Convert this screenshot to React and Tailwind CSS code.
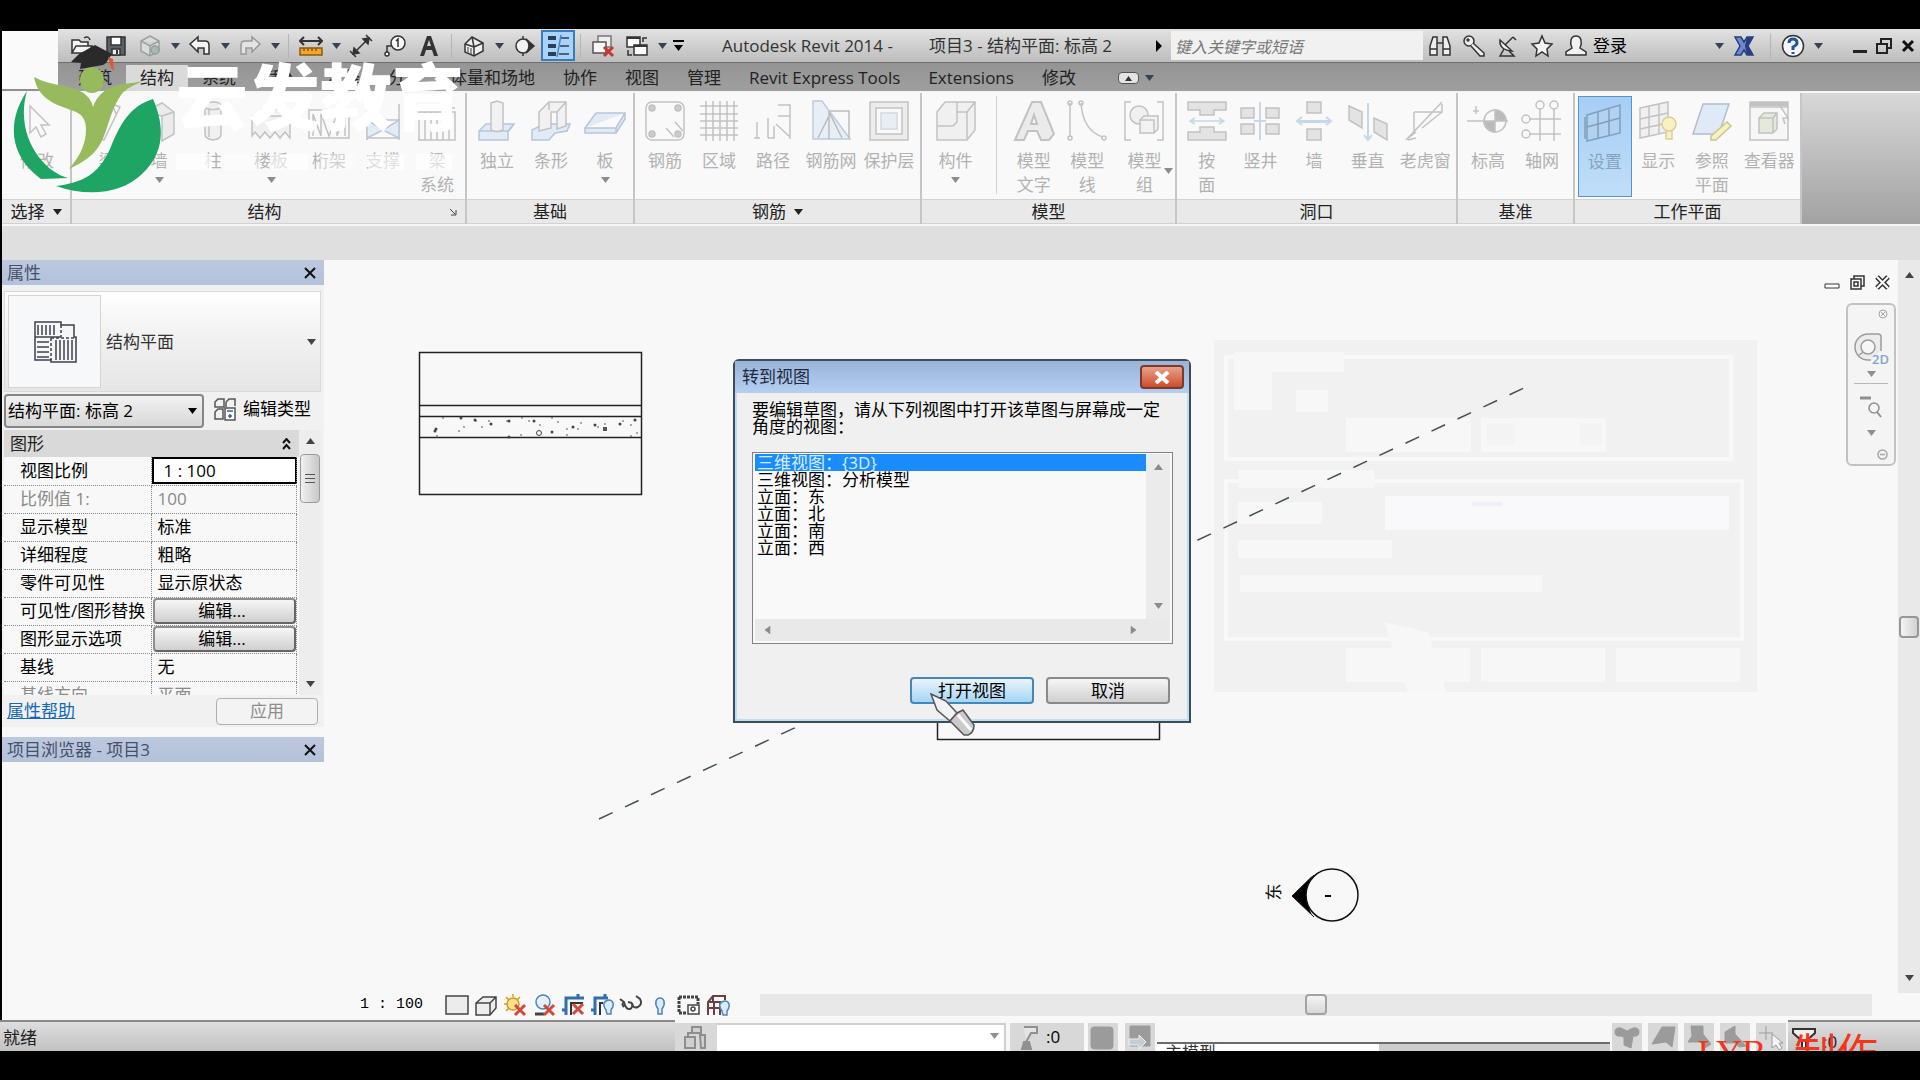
import React, { useState } from "react";

const Caret = ({ className = "text-gray-700" }) => (
  <svg width="9" height="6" viewBox="0 0 9 6" className={className}>
    <path d="M0 0h9L4.5 6z" fill="currentColor" />
  </svg>
);

const CaretButton = ({ label }) => (
  <button aria-label={label} className="w-4 h-8 flex items-center justify-center">
    <Caret />
  </button>
);

const ToolSeparator = () => (
  <div className="w-[11px] h-6 flex justify-center">
    <div className="w-px h-full bg-[#b4b4b4]" />
  </div>
);

const ToolButton = ({ label, active, children }) => (
  <button
    aria-label={label}
    className={
      active
        ? "w-[34px] h-[31px] flex items-center justify-center border-2 border-[#3d7ab8] bg-[#a9d3fb]"
        : "w-[34px] h-8 flex items-center justify-center"
    }
  >
    <svg
      width="24"
      height="24"
      viewBox="0 0 24 24"
      fill="none"
      stroke="#333"
      strokeWidth="1.5"
    >
      {children}
    </svg>
  </button>
);

const QuickAccessBar = () => (
  <div className="flex items-center h-[34px] pl-[7px] border-b border-[#6f6f6f] bg-linear-to-b from-[#e2e2e2] to-[#bdbdbd] whitespace-nowrap">
    <ToolButton label="打开">
      <path d="M2 19V6h7l2 2h7v4M2 19l4-7h16l-4 7z" fill="#f4f4f4" />
      <path d="M14 4c3-2 5-1 6 2" />
    </ToolButton>
    <ToolButton label="保存">
      <path d="M3 3h18v18H3z" fill="#5a6068" />
      <path d="M7 3h10v8H7z" fill="#fff" />
      <path d="M8 15h8v6H8z" fill="#eee" />
      <path d="M13 16v4" strokeWidth="2" />
    </ToolButton>
    <ToolButton label="同步">
      <path d="M12 2l9 5v10l-9 5-9-5V7zM3 7l9 5 9-5M12 12v10" fill="#d8dcdc" stroke="#9aa0a0" />
      <circle cx="17" cy="16" r="4" fill="#a9b8b4" stroke="#8fa09c" />
    </ToolButton>
    <CaretButton label="同步选项" />
    <ToolButton label="放弃">
      <path d="M2 10l8-7v4h7q4 0 4 4v9h-5v-6h-6v4z" fill="#f4f4f4" />
    </ToolButton>
    <CaretButton label="放弃列表" />
    <ToolButton label="重做">
      <path d="M22 10l-8-7v4H7q-4 0-4 4v9h5v-6h6v4z" fill="#e4e4e4" stroke="#999" />
    </ToolButton>
    <CaretButton label="重做列表" />
    <ToolSeparator />
    <ToolButton label="测量">
      <path d="M1 7h22M5 3L1 7l4 4M19 3l4 4-4 4" strokeWidth="2" />
      <path d="M1 14h22v7H1z" fill="#f2a62a" stroke="#8a5a10" />
      <path d="M5 14v3M9 14v3M13 14v3M17 14v3" stroke="#8a5a10" />
    </ToolButton>
    <CaretButton label="测量选项" />
    <ToolButton label="对齐尺寸标注">
      <path d="M4 20L20 4M1 17l6 6M17 1l6 6" />
      <path d="M4 20l1-6 5 5zM20 4l-1 6-5-5z" fill="#333" />
    </ToolButton>
    <ToolButton label="按类别标记">
      <circle cx="15" cy="9" r="7" fill="#f6f6f6" />
      <path d="M8 12H4v6M13 7l2-2v8" />
      <circle cx="4" cy="20" r="2" fill="#fff" />
    </ToolButton>
    <ToolButton label="文字">
      <path d="M3 22L10 2h4l7 20h-4l-2-6H9l-2 6zM10 12h4l-2-6z" fill="#333" stroke="none" fillRule="evenodd" />
    </ToolButton>
    <ToolSeparator />
    <ToolButton label="默认三维视图">
      <path d="M3 10l7-7 11 6v8l-9 5-9-4z" fill="#eee" />
      <path d="M3 10l9 3 9-4M12 13v9M10 3l2 10" />
      <path d="M6 13v6M9 14v6" stroke="#777" />
    </ToolButton>
    <CaretButton label="三维视图选项" />
    <ToolButton label="剖面">
      <circle cx="11" cy="12" r="7" fill="#f1f1f1" />
      <path d="M14 5l8 7-8 7q6-7 0-14z" fill="#333" />
      <path d="M11 2v3M11 19v3" />
    </ToolButton>
    <ToolButton label="细线" active>
      <path d="M2 4h8M2 12h8M2 20h8" strokeWidth="4" stroke="#2b3f5c" />
      <path d="M15 4h8M14 12h9M13 20h10" stroke="#2b3f5c" />
      <path d="M15 1l-4 22" stroke="#4b86c4" />
    </ToolButton>
    <ToolSeparator />
    <ToolButton label="关闭隐藏窗口">
      <path d="M7 2h13v11H7z" fill="#eee" stroke="#777" />
      <path d="M2 8h13v11H2z" fill="#f6f6f6" stroke="#555" />
      <path d="M13 13l9 9M22 13l-9 9" stroke="#c8372b" strokeWidth="3" />
    </ToolButton>
    <ToolButton label="切换窗口">
      <path d="M2 3h13v10H2z" fill="#fff" />
      <path d="M9 11h13v10H9z" fill="#fff" />
      <path d="M2 4h13M9 12h13" strokeWidth="2" />
      <path d="M18 8V4h4M3 16v5h4" />
    </ToolButton>
    <CaretButton label="窗口列表" />
    <button aria-label="自定义快速访问工具栏" className="w-4 flex flex-col items-center gap-[3px]">
      <span className="w-[11px] h-0.5 bg-black" />
      <Caret className="text-black" />
    </button>
    <div className="flex flex-1 items-center pl-9 text-[17px] text-[#333]">
      <span className="w-[207px]">Autodesk Revit 2014 -</span>
      <span>项目3 - 结构平面: 标高 2</span>
    </div>
    <button aria-label="展开搜索" className="w-4 h-8 flex items-center justify-center">
      <svg width="6" height="12" viewBox="0 0 6 12"><path d="M0 0l6 6-6 6z" /></svg>
    </button>
    <input
      aria-label="搜索"
      placeholder="键入关键字或短语"
      className="w-[252px] h-[29px] ml-1 pl-1 bg-[#f1f1f1] font-['Noto_Sans_CJK_SC',sans-serif] text-[16px] italic placeholder:text-[#777] outline-none"
    />
    <ToolButton label="查找">
      <path d="M2 21V12l3-9h4v18zM22 21V12l-3-9h-4v18zM9 9h6M2 15h7M15 15h7" fill="#eee" />
    </ToolButton>
    <ToolButton label="速博应用中心">
      <circle cx="7" cy="7" r="5" fill="#eee" />
      <circle cx="6" cy="6" r="1" />
      <path d="M11 9l11 10v3h-4L9 12" fill="#eee" />
    </ToolButton>
    <ToolButton label="通讯中心">
      <path d="M4 6q-1 10 12 11z" fill="#eee" />
      <path d="M9 11l8-8M17 3l3 3M8 15l-4 7h14l-5-5" />
    </ToolButton>
    <ToolButton label="收藏夹">
      <path d="M12 2l3 7 7 1-5 5 1 7-6-4-6 4 1-7-5-5 7-1z" fill="#f2f2f2" />
    </ToolButton>
    <ToolButton label="用户">
      <path d="M8 14Q6 10 7 6q1-4 5-4t5 4q1 4-1 8l6 4v3H2v-3z" fill="#f2f2f2" />
    </ToolButton>
    <button className="w-[118px] text-left text-[17px] text-black">登录</button>
    <CaretButton label="登录选项" />
    <ToolButton label="Exchange">
      <path d="M3 3h6l3 5 3-5h6l-5 9 5 9h-6l-3-5-3 5H3l5-9z" fill="#6d8ac9" stroke="#263f80" />
      <path d="M15 3h6l-5 9 5 9h-6l-2-9z" fill="#263f80" stroke="none" />
    </ToolButton>
    <div className="pl-1">
      <ToolSeparator />
    </div>
    <ToolButton label="帮助">
      <circle cx="12" cy="12" r="10.500" fill="#f4f7fb" />
      <path d="M8 9q0-4 4-4t4 4q0 2-4 4v3M12 18v2" stroke="#23559c" strokeWidth="3" />
    </ToolButton>
    <CaretButton label="帮助选项" />
    <div className="flex items-center pl-[22px]">
      <button aria-label="最小化" className="w-6 flex justify-center pt-3">
        <span className="w-3.5 h-[3px] bg-[#222]" />
      </button>
      <button aria-label="还原" className="w-6 flex justify-center">
        <svg width="18" height="18" viewBox="0 0 18 18" fill="none" stroke="#222" strokeWidth="2">
          <path d="M6 6V2h10v9h-4M2 7h10v9H2z" />
        </svg>
      </button>
      <button aria-label="关闭" className="w-6 flex justify-center">
        <svg width="14" height="14" viewBox="0 0 14 14" stroke="#111" strokeWidth="3">
          <path d="M2 2l10 10M12 2L2 12" />
        </svg>
      </button>
    </div>
  </div>
);

const tabs = [
  "建筑",
  "结构",
  "系统",
  "插入",
  "注释",
  "分析",
  "体量和场地",
  "协作",
  "视图",
  "管理",
  "Revit Express Tools",
  "Extensions",
  "修改",
];

const TabBar = () => (
  <div className="flex items-end h-7 pl-1.5 bg-linear-to-b from-[#949494] to-[#9f9f9f] whitespace-nowrap">
    {tabs.map((tab) => (
      <button
        key={tab}
        className={
          tab === "结构"
            ? "h-[26px] px-3.5 leading-[26px] text-[17px] text-[#222] bg-[#dadada]"
            : "h-[26px] px-3.5 leading-[26px] text-[17px] text-[#222]"
        }
      >
        {tab}
      </button>
    ))}
    <button aria-label="最小化功能区" className="flex items-center h-[26px] gap-1.5 ml-7">
      <span className="flex items-center justify-center w-[21px] h-3 rounded-sm border border-[#555] bg-[#e4e4e4]">
        <svg width="7" height="5" viewBox="0 0 7 5"><path d="M0 5h7L3.500 0z" fill="#333" /></svg>
      </span>
      <Caret />
    </button>
  </div>
);

const icons = {
  modify: <path d="M14 6v27l6-6 5 10 5-3-5-9h8z" />,
  beam: <path d="M8 36L26 4l8 3-16 33zM12 28l8 3M26 4l4 10" />,
  wall: <path d="M6 12L24 3l12 9v22l-12 7V16zM24 16l12-4" fill="#ebebeb" />,
  column: <path d="M13 6q0-4 8-4t8 4v28q0 5-8 6-8-1-8-6zM13 8q8 3 16 0M17 9v28" fill="#f0f0f0" />,
  floor: <path d="M2 16h38v22l-5-6-5 6-5-6-5 6-5-6-5 6-5-6-3 4zM10 9h24v7" fill="#f0f0f0" />,
  truss: <path d="M1 10h40v28H1zM5 36V14l8 22V14l8 22 8-22v22l8-22v22" />,
  brace: (
    <g>
      <path d="M5 4v36M37 4v36M5 20h32M5 38h32" />
      <path d="M5 20l16 10L37 20v18L21 30 5 38z" fill="#e3ecf6" stroke="#b9c9dc" />
    </g>
  ),
  beamSystem: <path d="M3 12h36v28H3zM9 12v28M15 12v28M21 12v28M27 12v28M33 12v28M3 8h36" />,
  isolated: (
    <g>
      <path d="M3 31l7-7h28l-6 8v8H3zM3 31h29M32 31l6-7" fill="#e1ebf7" stroke="#b6c6da" />
      <path d="M15 3l6-2 6 2v27q-6 3-12 0z" fill="#f1f1f1" />
    </g>
  ),
  strip: (
    <g>
      <path d="M2 30l12-6h26l-3 7-12 2-6 7H2z" fill="#e1ebf7" stroke="#b6c6da" />
      <path d="M9 12L19 2h17v24l-9 3V12h-6v16l-12 3zM19 2v8M27 12l9-10" fill="#f1f1f1" />
    </g>
  ),
  slab: <path d="M1 28l11-15h29l-9 15zM1 28v5h31l9-14v-6M32 28v5" fill="#e1ebf7" stroke="#b6c6da" />,
  rebar: (
    <g>
      <rect x="2" y="2" width="38" height="38" rx="6" />
      <circle cx="8" cy="8" r="3" fill="#ccc" />
      <circle cx="34" cy="8" r="3" fill="#ccc" />
      <circle cx="8" cy="34" r="3" fill="#ccc" />
      <circle cx="34" cy="34" r="3" fill="#ccc" />
      <path d="M22 28l8 9M31 22l8 9" />
    </g>
  ),
  area: <path d="M2 6h38M2 14h38M2 21h38M2 28h38M2 35h38M8 1v40M15 1v40M22 1v40M29 1v40M36 1v40" />,
  path: <path d="M2 38h6M5 38V22M16 38V18M16 38h6V26M26 5h12v34M26 16h12M24 24l14 13" />,
  fabric: (
    <g stroke="#bccbdb">
      <path d="M3 1h9l28 38H3zM3 1v38" fill="#e7eef6" />
      <path d="M20 11h19v27M19 11v28M8 38l12-24 12 24" stroke="#bcbcbc" />
    </g>
  ),
  cover: (
    <g>
      <rect x="2" y="2" width="38" height="38" fill="#ececec" />
      <rect x="8" y="8" width="26" height="26" fill="#f9f9f9" />
      <rect x="13" y="13" width="16" height="16" fill="#e8eef5" stroke="#d3d9e0" />
    </g>
  ),
  component: <path d="M2 12L10 2h30v28l-8 10H2zM22 2v20l-4 4H2M32 12v28M32 12l8-10M22 12h10" fill="#f0f0f0" />,
  modelText: (
    <path d="M2 40l17-38h9l13 32-5 6h-8l-4-9H15l-4 9zM18 24h6l-3-9z" fill="#ebebeb" fillRule="evenodd" strokeWidth="2" />
  ),
  modelLine: (
    <g>
      <path d="M4 3v34M15 3q2 28 22 34" />
      <circle cx="4" cy="3" r="2" />
      <circle cx="4" cy="38" r="2" />
      <circle cx="15" cy="3" r="2" />
      <circle cx="38" cy="38" r="2" />
    </g>
  ),
  modelGroup: (
    <g>
      <path d="M8 2H2v38h6M34 2h6v38h-6" />
      <circle cx="16" cy="15" r="9" fill="#f0f0f0" />
      <path d="M17 20l4-4h14v13l-4 4H17zM17 20h14v13" fill="#f2f2f2" />
    </g>
  ),
  byFace: (
    <g>
      <path d="M2 2h38v8H28v5H14v-5H2zM2 40h38v-8H28v-5H14v5H2z" fill="#e3e3e3" />
      <path d="M4 21h34M9 18l-5 3 5 3M33 18l5 3-5 3" stroke="#c5d8ea" />
    </g>
  ),
  shaft: (
    <g>
      <path d="M2 8h13v10H2zM27 8h13v10H27zM2 24h13v10H2zM27 24h13v10H27z" fill="#e3e3e3" />
      <path d="M21 2v38M15 21h12" stroke="#c5d8ea" strokeWidth="2" />
    </g>
  ),
  wallOpening: (
    <g>
      <path d="M14 2h14v11H14zM14 29h14v11H14z" fill="#e3e3e3" />
      <path d="M4 21h34M9 17l-5 4 5 4M33 17l5 4-5 4M8 22h26" stroke="#c5d8ea" strokeWidth="2" />
    </g>
  ),
  vertical: (
    <g>
      <path d="M2 6l13 6v16L2 20zM27 18l13 6v16l-13-8z" fill="#e3e3e3" />
      <path d="M21 3v36M17 35l4 5 4-5" stroke="#c5d8ea" strokeWidth="2" />
    </g>
  ),
  dormer: <path d="M2 40L38 2M10 12h28v-8M10 12v22M18 28l20-16M4 40l8-2M2 40l10-8" />,
  level: (
    <g>
      <path d="M0 21h41M9 6v8M6 11h6" />
      <circle cx="28" cy="21" r="11" fill="#f9f9f9" />
      <path d="M28 21V10a11 11 0 0 1 11 11zM28 21v11a11 11 0 0 1-11-11z" fill="#bbb" />
    </g>
  ),
  grid: (
    <g>
      <path d="M8 19h32M8 34h32M19 9v32M33 9v32" />
      <circle cx="19" cy="5" r="4" />
      <circle cx="33" cy="5" r="4" />
      <circle cx="5" cy="19" r="4" />
      <circle cx="5" cy="34" r="4" />
    </g>
  ),
  set: (
    <g stroke="#7f9fc1">
      <path d="M3 14L36 4v28L3 40zM3 26l33-9M14 10v27M25 7v27M1 16v22" fill="#b3d2f2" />
    </g>
  ),
  show: (
    <g>
      <path d="M3 8l28-6v30L3 38zM3 19l28-6M3 29l28-6M12 6v30M22 4v30" fill="#f0f0f0" />
      <circle cx="32" cy="24" r="7" fill="#fbf0c0" stroke="#dccf96" />
      <path d="M29 31h6v8h-6z" fill="#fbf0c0" stroke="#dccf96" />
    </g>
  ),
  refPlane: (
    <g>
      <path d="M12 4h26L28 34H2z" fill="#dfe9f7" stroke="#b0bfd2" />
      <path d="M20 36l16-14 4 4-15 14h-5z" fill="#f6f2bd" stroke="#c9c591" />
    </g>
  ),
  viewer: (
    <g>
      <path d="M2 2h38v38H2zM2 7h38" fill="#f6f6f6" />
      <path d="M2 4h38" strokeWidth="4" />
      <path d="M11 18l5-5h13v16l-4 4H11zM11 18h14v15M25 18l4-5" fill="#e3eadb" />
      <path d="M32 6l8 12h-5l2 6" fill="#fff" />
    </g>
  ),
};

const panels = [
  {
    title: "选择",
    menu: true,
    width: "w-[70px] pl-2",
    items: [{ icon: "modify", label: ["修改"] }],
  },
  {
    title: "结构",
    launcher: true,
    width: "w-[395px] pl-[10px]",
    items: [
      { icon: "beam", label: ["梁"], width: "w-[50px]" },
      { icon: "wall", label: ["墙"], menu: true },
      { icon: "column", label: ["柱"] },
      { icon: "floor", label: ["楼板"], menu: true, width: "w-[62px]" },
      { icon: "truss", label: ["桁架"] },
      { icon: "brace", label: ["支撑"] },
      { icon: "beamSystem", label: ["梁", "系统"] },
    ],
  },
  {
    title: "基础",
    width: "w-[168px] pl-[3px]",
    items: [
      { icon: "isolated", label: ["独立"] },
      { icon: "strip", label: ["条形"] },
      { icon: "slab", label: ["板"], menu: true },
    ],
  },
  {
    title: "钢筋",
    menu: true,
    width: "w-[287px] pl-[3px]",
    items: [
      { icon: "rebar", label: ["钢筋"] },
      { icon: "area", label: ["区域"] },
      { icon: "path", label: ["路径"] },
      { icon: "fabric", label: ["钢筋网"], width: "w-[62px]" },
      { icon: "cover", label: ["保护层"] },
    ],
  },
  {
    title: "模型",
    width: "w-[255px] pl-[3px]",
    items: [
      { icon: "component", label: ["构件"], menu: true, divider: true, width: "w-[62px]" },
      { icon: "modelText", label: ["模型", "文字"] },
      { icon: "modelLine", label: ["模型", "线"] },
      { icon: "modelGroup", label: ["模型", "组"], sideMenu: true, width: "w-[62px]" },
    ],
  },
  {
    title: "洞口",
    width: "w-[281px] pl-[3px]",
    items: [
      { icon: "byFace", label: ["按", "面"] },
      { icon: "shaft", label: ["竖井"] },
      { icon: "wallOpening", label: ["墙"] },
      { icon: "vertical", label: ["垂直"] },
      { icon: "dormer", label: ["老虎窗"], width: "w-[62px]" },
    ],
  },
  {
    title: "基准",
    width: "w-[117px] pl-[3px]",
    items: [
      { icon: "level", label: ["标高"] },
      { icon: "grid", label: ["轴网"] },
    ],
  },
  {
    title: "工作平面",
    width: "w-[227px] pl-[3px]",
    items: [
      { icon: "set", label: ["设置"], active: true },
      { icon: "show", label: ["显示"] },
      { icon: "refPlane", label: ["参照", "平面"] },
      { icon: "viewer", label: ["查看器"], width: "w-[62px]" },
    ],
  },
];

const RibbonButton = ({ item }) => (
  <>
    <button
      className={`${item.width || "w-[54px]"} relative flex flex-col items-center h-[101px] pt-1 text-[17px] leading-6 whitespace-nowrap ${
        item.active
          ? "border border-[#5b93c6] bg-linear-to-b from-[#a6cef5] to-[#bfdef9] text-[#8aa3bd]"
          : "text-[#b2b2b2]"
      }`}
    >
      <svg width="42" height="42" viewBox="0 0 42 42" fill="none" stroke="#c2c2c2" strokeWidth="1.500">
        {icons[item.icon]}
      </svg>
      <span className="mt-[7px]">{item.label[0]}</span>
      {item.label[1] && <span>{item.label[1]}</span>}
      {item.menu && <Caret className="mt-1 text-[#8c8c8c]" />}
      {item.sideMenu && (
        <span className="absolute right-0.5 top-[72px]">
          <Caret className="text-[#8c8c8c]" />
        </span>
      )}
    </button>
    {item.divider && <div className="w-px h-[98px] mx-2.5 bg-[#d4d4d4]" />}
  </>
);

const Ribbon = () => (
  <div className="flex h-[135px] border-y-2 border-[#f6f6f6] bg-[#f9f9fa]">
    {panels.map((panel) => {
      const [width, padding] = panel.width.split(" ");
      return (
        <section key={panel.title} className={`${width} shrink-0 flex flex-col border-r-2 border-[#c6c6c6]`}>
          <div className={`${padding} flex flex-1 pt-[3px]`}>
            {panel.items.map((item) => (
              <RibbonButton key={item.icon} item={item} />
            ))}
          </div>
          <div className="flex items-center h-[25px] px-2 border-y border-[#d2d2d2] bg-[#e9e9e9] text-[17px] text-[#222]">
            <span className="flex flex-1 items-center justify-center gap-2">
              {panel.title}
              {panel.menu && <Caret className="text-[#222]" />}
            </span>
            {panel.launcher && (
              <svg width="8" height="8" viewBox="0 0 8 8" fill="none" stroke="#444">
                <path d="M1 1l5 5M7 2v5H2" />
              </svg>
            )}
          </div>
        </section>
      );
    })}
    <div className="flex-1 bg-linear-to-b from-[#d8d8d8] to-[#a2a2a2]" />
  </div>
);

const Watermark = () => (
  <div className="absolute left-3 top-[44px] flex pointer-events-none" aria-hidden="true">
    <svg width="152" height="152" viewBox="0 0 152 152">
      <path d="M15 47C-4 75-5 110 29 135l27-1C32 128 2 92 15 47z" fill="#1ea463" />
      <path d="M141 55c11 25 13 53-11 75-20 20-55 23-86 12 34-4 44-17 54-37 10-25 20-43 43-50z" fill="#1ea463" />
      <path
        d="M22 33c17 9 34 8 48 15 6 4 10 9 11 15 3-9 8-14 15-18 10-6 22-5 35-8-10 5-17 7-22 14-9 13-12 28-17 41-5 14-15 24-35 33 12-14 17-26 17-40 0-8-3-14-10-17-17-7-37-10-42-35z"
        fill="#97ba5c"
      />
      <ellipse cx="80" cy="36" rx="12" ry="13" fill="#97ba5c" />
      <path d="M83 1l17 9-6 9-3 2-23 4 1-6-10-1 8-8z" fill="#2a2a2a" />
      <path d="M96 13l5 2 1 12-3-3z" fill="#e4572b" />
    </svg>
    <div className="pt-4 pl-3">
      <div className="text-[72px] leading-[72px] font-black text-white">云发教育</div>
      <div className="flex gap-3 pt-[22px]">
        <span className="w-9 h-4 bg-white/70" />
        <span className="w-9 h-4 bg-white/40" />
        <span className="w-9 h-4 bg-white/60" />
        <span className="w-9 h-4 bg-white/40" />
        <span className="w-9 h-4 bg-white/60" />
        <span className="w-9 h-4 bg-white/60" />
      </div>
    </div>
  </div>
);

const CloseIcon = () => (
  <svg width="12" height="12" viewBox="0 0 12 12" stroke="#111" strokeWidth="2">
    <path d="M1 1l10 10M11 1L1 11" />
  </svg>
);

const PaletteHeader = ({ title }) => (
  <div className="flex items-center justify-between h-[25px] pl-[5px] pr-2 bg-linear-to-b from-[#bcc8de] to-[#b3c2db] text-[17px] text-[#45526a]">
    <span>{title}</span>
    <button aria-label={`关闭${title}`}>
      <CloseIcon />
    </button>
  </div>
);

const properties = [
  { name: "视图比例", value: "1 : 100", boxed: true },
  { name: "比例值 1:", value: "100", muted: true },
  { name: "显示模型", value: "标准" },
  { name: "详细程度", value: "粗略" },
  { name: "零件可见性", value: "显示原状态" },
  { name: "可见性/图形替换", value: "编辑...", button: true },
  { name: "图形显示选项", value: "编辑...", button: true },
  { name: "基线", value: "无" },
  { name: "基线方向", value: "平面", muted: true },
];

const PropertyValue = ({ row }) => {
  if (row.button) {
    return (
      <button className="block w-[143px] h-[26px] ml-px pr-1 rounded-sm border-2 border-[#8d8d8d] border-b-[#666] border-r-[#666] bg-linear-to-b from-[#f6f6f6] to-[#d0d0d0] leading-[22px]">
        {row.value}
      </button>
    );
  }
  if (row.boxed) {
    return (
      <input
        aria-label={row.name}
        defaultValue={row.value}
        className="block w-[145px] h-[27px] pl-2.5 border-2 border-black bg-white outline-none"
      />
    );
  }
  return <div className="pl-1.5 leading-[26px]">{row.value}</div>;
};

const PropertiesPalette = () => (
  <div>
    <PaletteHeader title="属性" />
    <div className="pt-1.5 pl-0.5 pr-[3px] bg-[#f1f1f1]">
      <button className="flex items-center w-full h-[101px] p-[3px] pr-1 border border-[#d9d9d9] bg-linear-to-b from-white via-[#f0f0f0] to-[#e6e6e6] text-[17px] text-[#333]">
        <span className="flex items-center justify-center w-[93px] h-full border border-[#d4d4d4] bg-[#f7f8fa]">
          <svg width="44" height="44" viewBox="0 0 44 44" fill="none" stroke="#3b4250" strokeWidth="1.500">
            <path d="M2 2h26v3h13v12h2v25H18v-2H2z" fill="#f6f6f6" />
            <path d="M5 5v10M9 5v10M13 5v10M17 5v10M21 5v10M4 22h12M4 27h12M4 32h12M4 37h12M2 17h26" />
            <path d="M23 20v20M27 20v20M31 20v20M35 20v20M39 20v20" />
            <path d="M18 18v22M28 5v12M18 18h24" strokeDasharray="3 2" />
          </svg>
        </span>
        <span className="flex-1 pl-[5px] text-left">结构平面</span>
        <Caret className="text-[#444]" />
      </button>
      <div className="flex items-center h-[38px] text-[17px] text-black">
        <div className="relative w-[200px] h-[34px]">
          <select
            aria-label="结构平面"
            className="w-full h-full pl-0.5 appearance-none rounded-sm border-2 border-[#868686] bg-linear-to-b from-[#f2f2f2] to-[#d8d8d8] outline-none"
          >
            <option>结构平面: 标高 2</option>
          </select>
          <span className="absolute right-[7px] top-[14px] pointer-events-none">
            <Caret className="text-black" />
          </span>
        </div>
        <button className="flex items-center gap-1.5 pl-[9px] pb-1">
          <svg width="24" height="24" viewBox="0 0 24 24" fill="none" stroke="#555" strokeWidth="1.500">
            <path d="M2 5l3-3h6v8H2zM13 5l3-3h6v7M13 10V5M2 15l3-3h5v10H2z" />
            <rect x="12" y="11" width="10" height="12" fill="#fff" />
            <path d="M14 14h6M17 17v4M15 19h4" stroke="#33639c" />
          </svg>
          编辑类型
        </button>
      </div>
      <div className="flex h-[265px] overflow-hidden text-[17px]">
        <div className="w-[295px] shrink-0 bg-[#f8f8f8]">
          <div className="flex items-center justify-between h-[27px] pl-1.5 pr-2 bg-[#d9d9d9] text-[#222]">
            图形
            <svg width="9" height="12" viewBox="0 0 9 12" fill="none" stroke="#111" strokeWidth="2">
              <path d="M1 5l3.500-4L8 5M1 11l3.500-4L8 11" />
            </svg>
          </div>
          <table className="w-[293px] table-fixed border-collapse">
            <tbody>
              {properties.map((row) => (
                <tr key={row.name} className={row.muted ? "h-7 text-[#8b8b8b]" : "h-7 text-black"}>
                  <th className="w-[147px] h-7 p-0 pl-4 border-b border-r border-dotted border-[#888] text-left font-normal whitespace-nowrap">
                    {row.name}
                  </th>
                  <td className="h-7 p-0 border-b border-r border-dotted border-[#888] whitespace-nowrap">
                    <PropertyValue row={row} />
                  </td>
                </tr>
              ))}
            </tbody>
          </table>
        </div>
        <div className="flex-1 flex flex-col items-center justify-between py-2 bg-[#ededed]">
          <div className="flex flex-col items-center gap-2.5">
            <Caret className="rotate-180 text-[#444]" />
            <div className="flex flex-col items-center justify-center gap-[3px] w-5 h-[49px] rounded-sm border border-[#9a9a9a] bg-linear-to-r from-[#f0f0f0] to-[#c8c8c8]">
              <span className="w-2.5 h-px bg-[#555]" />
              <span className="w-2.5 h-px bg-[#555]" />
              <span className="w-2.5 h-px bg-[#555]" />
            </div>
          </div>
          <Caret className="text-[#444]" />
        </div>
      </div>
      <div className="flex items-center justify-between h-8 pl-[3px] pr-[3px] text-[17px]">
        <a href="#help" className="text-[#1668b4] underline">
          属性帮助
        </a>
        <button className="w-[102px] h-[27px] rounded-sm border border-[#b0b0b0] bg-[#f3f3f3] leading-6 text-[#8c8c8c]">
          应用
        </button>
      </div>
    </div>
    <div className="pt-2.5 bg-[#f8f8f8]">
      <PaletteHeader title="项目浏览器 - 项目3" />
    </div>
  </div>
);

const speckles = [
  [435, 431], [437, 436], [443, 418], [461, 418], [459, 431], [464, 427], [475, 420], [476, 421],
  [489, 421], [491, 424], [482, 427], [507, 421], [509, 421], [522, 418], [529, 421], [534, 421],
  [540, 425], [552, 418], [552, 432], [558, 422], [567, 429], [573, 427], [578, 429], [581, 423],
  [595, 425], [598, 427], [605, 424], [620, 424], [623, 421], [631, 425], [635, 420], [637, 433],
  [567, 435], [509, 437], [521, 435], [631, 436], [436, 429],
];

const Drawing = () => (
  <svg className="absolute inset-0 w-full h-full" fill="none">
    <g transform="translate(-324 -260)">
      <rect x="1214" y="340" width="543" height="352" fill="#f1f1f1" />
      <g stroke="#f8f8f8" strokeWidth="4">
        <rect x="1226" y="357" width="505" height="102" />
        <rect x="1226" y="481" width="516" height="158" />
      </g>
      <g fill="#f7f7f7">
        <rect x="1234" y="352" width="110" height="20" />
        <rect x="1234" y="372" width="38" height="38" />
        <rect x="1296" y="390" width="32" height="22" />
        <rect x="1346" y="418" width="125" height="34" />
        <rect x="1481" y="418" width="125" height="34" />
        <rect x="1238" y="470" width="136" height="18" />
        <rect x="1238" y="502" width="84" height="22" />
        <rect x="1385" y="496" width="344" height="34" fill="#f9f9fb" />
        <rect x="1238" y="540" width="154" height="18" />
        <rect x="1240" y="575" width="302" height="17" />
        <rect x="1346" y="648" width="124" height="34" />
        <rect x="1481" y="648" width="124" height="34" />
        <rect x="1616" y="648" width="124" height="34" />
        <path d="M1384 622l44 10 18 60h-38z" />
      </g>
      <rect x="1487" y="423" width="28" height="22" fill="#f3f3f3" />
      <rect x="1580" y="423" width="22" height="22" fill="#f3f3f3" />
      <rect x="1472" y="502" width="30" height="4" fill="#eef0f6" />
      <g stroke="#222" strokeWidth="1.500">
        <path d="M419.500 352.500h222v142h-222zM419 405.500h223M419 416.500h223M419 437.500h223" />
        <path d="M937.500 597.500h222v142h-222zM937 650.500h223M937 661.500h223M937 682.500h223" />
      </g>
      {speckles.map(([x, y], i) => (
        <circle key={i} cx={x} cy={y} r={i % 3 === 0 ? 1.5 : 0.8} fill="#444" />
      ))}
      <circle cx="539" cy="433" r="2.500" stroke="#444" />
      <rect x="603" y="427" width="4" height="4" fill="#555" />
      <path d="M599 819L1524 388" stroke="#45524c" strokeWidth="1.500" strokeDasharray="15 13.700" />
      <path d="M1292 896l20-20q-10 20 0 39z" fill="#000" />
      <circle cx="1332" cy="895" r="26" fill="#f8f8f8" stroke="#111" strokeWidth="1.500" />
      <path d="M1292 896l22-21M1292 896l22 21" stroke="#111" />
      <path d="M1325 896h6" stroke="#111" strokeWidth="2" />
      <text x="1273" y="892" transform="rotate(-90 1273 892)" textAnchor="middle" dominantBaseline="central" fontSize="17" fill="#111">
        东
      </text>
    </g>
  </svg>
);

const NavigationBar = () => (
  <div className="flex flex-col items-center w-[50px] h-[163px] px-1.5 py-1 rounded-md border-2 border-[#c2c2c2] bg-[#f4f4f4]">
    <button aria-label="关闭导航栏" className="self-end">
      <svg width="10" height="10" viewBox="0 0 10 10" fill="none" stroke="#a5a5a5">
        <circle cx="5" cy="5" r="4" />
        <path d="M3 3l4 4M7 3L3 7" />
      </svg>
    </button>
    <button aria-label="控制盘" className="relative mt-3 -ml-1">
      <svg width="32" height="32" viewBox="0 0 32 32" fill="none" stroke="#9c9c9c" strokeWidth="1.500">
        <path d="M28 20V6q0-3-3-3H15A13 13 0 0 0 15 29h3M6 24l6-4" fill="#ececec" />
        <circle cx="15" cy="16" r="7" fill="#f6f6f6" />
      </svg>
      <span className="absolute -right-1 -bottom-1 text-[13px] leading-4 font-semibold text-[#86a3cf]">2D</span>
    </button>
    <span className="mt-2">
      <Caret className="text-[#8f8f8f]" />
    </span>
    <div className="w-full h-px mt-1.5 bg-[#b9b9b9]" />
    <button aria-label="缩放" className="mt-3">
      <svg width="24" height="22" viewBox="0 0 24 22" fill="none" stroke="#8f8f8f" strokeWidth="1.500">
        <path d="M1 2h11" strokeWidth="3" />
        <circle cx="15" cy="12" r="5" />
        <path d="M18 16l4 5" strokeWidth="2" />
      </svg>
    </button>
    <span className="mt-3">
      <Caret className="text-[#8f8f8f]" />
    </span>
    <svg className="self-end mt-auto" width="11" height="11" viewBox="0 0 11 11" fill="none" stroke="#a5a5a5" strokeWidth="1.500">
      <circle cx="5.500" cy="5.500" r="4.500" />
      <path d="M3 5.500h5" />
    </svg>
  </div>
);

const views = [
  "三维视图：{3D}",
  "三维视图：分析模型",
  "立面：东",
  "立面：北",
  "立面：南",
  "立面：西",
];

const GoToViewDialog = () => {
  const [selected, setSelected] = useState(views[0]);

  return (
    <div
      role="dialog"
      aria-label="转到视图"
      className="relative w-[458px] h-[364px] flex flex-col rounded-t-md border-2 border-[#3f4b58] bg-[#f0f0f0] text-[17px] text-black"
    >
      <div className="flex items-center justify-between h-8 pl-[7px] pr-[5px] bg-linear-to-b from-[#9ab4d8] to-[#b5cff2] text-[#1d2b40]">
        转到视图
        <button
          aria-label="关闭对话框"
          className="flex items-center justify-center w-11 h-6 rounded-sm border-2 border-[#7c3a2c] bg-linear-to-b from-[#e9a18c] to-[#cc4a28]"
        >
          <svg width="16" height="13" viewBox="0 0 16 13" stroke="#fff" strokeWidth="4">
            <path d="M2 1l12 11M14 1L2 12" />
          </svg>
        </button>
      </div>
      <div className="flex flex-1 flex-col pl-[15px] pr-3.5 pt-2 border-x-2 border-b-2 border-[#b9e2f5]">
        <p className="h-[51px] leading-[17px]">要编辑草图，请从下列视图中打开该草图与屏幕成一定角度的视图：</p>
        <div className="flex flex-col h-[192px] p-0.5 pt-px border border-[#7d838a] bg-[#f9f9f9]">
          <div className="flex flex-1">
            <ul role="listbox" aria-label="视图" className="flex-1">
              {views.map((view) => (
                <li
                  key={view}
                  role="option"
                  aria-selected={view === selected}
                  onClick={() => setSelected(view)}
                  className={
                    view === selected
                      ? "h-[17px] pl-0.5 leading-[17px] bg-[#1a8cff] text-[#d9ecff]"
                      : "h-[17px] pl-0.5 leading-[17px]"
                  }
                >
                  {view}
                </li>
              ))}
            </ul>
            <div className="flex flex-col items-center justify-between w-6 py-2.5 bg-[#ebebeb]">
              <Caret className="rotate-180 text-[#8b8b8b]" />
              <Caret className="text-[#8b8b8b]" />
            </div>
          </div>
          <div className="flex items-center justify-between h-[22px] pl-2 pr-8 bg-[#e9e9e9]">
            <Caret className="rotate-90 text-[#8b8b8b]" />
            <Caret className="-rotate-90 text-[#8b8b8b]" />
          </div>
        </div>
        <div className="flex justify-end gap-3 pt-[33px] pr-[3px]">
          <button className="w-[124px] h-[27px] rounded-sm border-2 border-[#4488b8] bg-linear-to-b from-[#e9f4fc] to-[#a6d5f5] leading-[23px]">
            打开视图
          </button>
          <button className="w-[124px] h-[27px] rounded-sm border-2 border-[#8a8a8a] bg-linear-to-b from-[#f5f5f5] to-[#d0d0d0] leading-[23px]">
            取消
          </button>
        </div>
      </div>
      <svg className="absolute left-[195px] top-[332px]" width="46" height="46" viewBox="0 0 46 46" stroke="#555" strokeWidth="1.500">
        <path d="M1 1l15 7 11 12-7 8L7 17z" fill="#f2f2f4" />
        <path d="M27 20l6-3 11 15q0 8-6 10h-4L20 28z" fill="#c9c9ce" />
        <path d="M28 22l13 15" stroke="#fff" strokeWidth="3" />
      </svg>
    </div>
  );
};

const ViewWindowButtons = () => (
  <div className="flex items-center gap-2.5">
    <button aria-label="最小化视图" className="pt-1.5">
      <svg width="16" height="6" viewBox="0 0 16 6" fill="#fff" stroke="#333">
        <path d="M1 1h14v4H1z" />
      </svg>
    </button>
    <button aria-label="还原视图">
      <svg width="15" height="15" viewBox="0 0 15 15" fill="none" stroke="#333" strokeWidth="1.500">
        <path d="M4 4V1h10v10h-3M1 4h10v10H1zM4 7h4v4H4z" />
      </svg>
    </button>
    <button aria-label="关闭视图">
      <svg width="15" height="15" viewBox="0 0 15 15" fill="none">
        <path d="M2 2l11 11M13 2L2 13" stroke="#333" strokeWidth="5" />
        <path d="M2 2l11 11M13 2L2 13" stroke="#fff" strokeWidth="2" />
      </svg>
    </button>
  </div>
);

const viewControls = [
  { name: "详细程度", art: <path d="M1 3h22v18H1z" fill="#ececec" /> },
  { name: "视觉样式", art: <path d="M2 10l7-6h13v11l-6 7H2zM2 10h14v12M16 10l6-6" fill="#eee" /> },
  {
    name: "关闭日光路径",
    art: (
      <g>
        <circle cx="10" cy="11" r="6" fill="#ffe08a" stroke="#d99a1c" />
        <path d="M10 1v3M1 11h3M3 4l3 3M17 4l-3 3M3 18l3-3" stroke="#d99a1c" />
        <path d="M12 12l10 10M22 12L12 22" stroke="#cf4a3a" strokeWidth="3" />
      </g>
    ),
  },
  {
    name: "关闭阴影",
    art: (
      <g>
        <circle cx="11" cy="9" r="7" fill="#e5f0fa" stroke="#4f86b8" />
        <path d="M3 21h9" strokeWidth="3" />
        <path d="M12 12l10 10M22 12L12 22" stroke="#cf4a3a" strokeWidth="3" />
      </g>
    ),
  },
  {
    name: "裁剪视图",
    art: (
      <g>
        <path d="M5 22V5h18M1 17h4M17 1v4" stroke="#2f6fae" strokeWidth="3" />
        <path d="M10 22V10h12" stroke="#333" strokeWidth="2" />
        <path d="M12 11l10 10M22 11L12 21" stroke="#cf4a3a" strokeWidth="3" />
      </g>
    ),
  },
  {
    name: "显示裁剪区域",
    art: (
      <g>
        <path d="M5 22V5h13M1 17h4M15 1v4" stroke="#2f6fae" strokeWidth="3" />
        <path d="M10 22V10h3" stroke="#333" strokeWidth="2" />
        <path d="M16 17q-3-4-2-7 2-3 5-3t4 3q1 3-2 7v4h-4z" fill="#d8ecfb" stroke="#4f86b8" />
      </g>
    ),
  },
  {
    name: "临时隐藏",
    art: <path d="M1 6l4 3q2 8 6 7 3-1 2-6M13 10q1 6 6 4 5-3 2-8L17 3M5 9q-3 2 0 5M13 10l-4-1" strokeWidth="2" />,
  },
  {
    name: "显示隐藏的图元",
    art: <path d="M10 16q-3-4-2-8 1-3 4-3t4 3q1 4-2 8v5h-4z" fill="#d8ecfb" stroke="#4f86b8" />,
  },
  {
    name: "临时视图属性",
    art: (
      <g>
        <path d="M2 4h19v7M2 4v16h8" strokeWidth="3" strokeDasharray="3 1" />
        <path d="M11 12h11v9H11z" fill="#fff" />
        <circle cx="16" cy="16" r="2" />
      </g>
    ),
  },
  {
    name: "显示分析模型",
    art: (
      <g>
        <path d="M2 22V9l5-6h12v4M2 15h12M8 9v13M2 9h12v13M7 3v6" stroke="#6a4046" strokeWidth="2" />
        <path d="M16 18q-3-4-2-7 2-3 5-3t4 3q1 3-2 7v4h-4z" fill="#d8ecfb" stroke="#4f86b8" />
      </g>
    ),
  },
];

const ViewControlBar = () => (
  <div className="flex h-[27px] pl-9 pr-[22px]">
    <div className="flex items-center w-[372px] h-6">
      <select
        aria-label="视图比例"
        className="w-[82px] appearance-none font-['Liberation_Mono',monospace] text-[15px] text-black outline-none"
      >
        <option>1 : 100</option>
      </select>
      {viewControls.map((control) => (
        <button key={control.name} aria-label={control.name} className="w-[29px] flex justify-center">
          <svg width="24" height="24" viewBox="0 0 24 24" fill="none" stroke="#444" strokeWidth="1.500">
            {control.art}
          </svg>
        </button>
      ))}
    </div>
    <div className="flex flex-1 h-[22px] mt-px ml-7 mr-[26px] bg-[#e8e8e8]">
      <div className="flex-1" />
      <div className="w-[22px] h-[21px] rounded-sm border-2 border-[#a2a2a2] bg-linear-to-b from-[#f4f4f4] to-[#d8d8d8]" />
      <div className="flex-1" />
    </div>
  </div>
);

const Workspace = () => (
  <div className="flex flex-1 bg-[#f8f8f8]">
    <aside className="w-[322px] shrink-0">
      <PropertiesPalette />
    </aside>
    <main className="flex flex-1 flex-col">
      <div className="relative flex flex-1">
        <Drawing />
        <div className="relative flex-1 flex flex-col items-end pt-[15px] pr-0.5">
          <div className="pr-1.5">
            <ViewWindowButtons />
          </div>
          <div className="pt-[13px]">
            <NavigationBar />
          </div>
        </div>
        <div className="relative flex flex-col items-center w-[22px] py-3 bg-[#e9e9e9]">
          <Caret className="rotate-180 text-[#444]" />
          <div className="flex-1" />
          <div className="w-5 h-[22px] rounded-sm border-2 border-[#979797] bg-linear-to-r from-[#f4f4f4] to-[#d2d2d2]" />
          <div className="flex-1" />
          <Caret className="text-[#444]" />
        </div>
      </div>
      <ViewControlBar />
    </main>
  </div>
);

const StatusTool = ({ label, children }) => (
  <button
    aria-label={label}
    className="flex items-center justify-center w-[34px] h-7 border-x-2 border-[#f7f7f7] bg-[#d8d8d8]"
  >
    <svg width="26" height="26" viewBox="0 0 26 26" fill="#9b9b9b" stroke="#9b9b9b">
      {children}
    </svg>
  </button>
);

const StatusBar = () => (
  <footer className="relative flex h-[31px] overflow-hidden bg-[#f7f7f8] text-[17px]">
    <div className="w-[675px] pl-[3px] border-t-2 border-[#8b8b8b] bg-linear-to-b from-[#dedede] to-[#c2c2c2] text-[#222] leading-8">
      就绪
    </div>
    <div className="flex items-end">
      <div className="flex w-[42px] h-7 items-center justify-center bg-[#d8d8d8]">
        <svg width="26" height="26" viewBox="0 0 26 26" fill="#d0d0d0" stroke="#8e8e8e" strokeWidth="2">
          <path d="M9 3h9v6H9zM2 13h10v11H2zM17 11h5v13h-4zM5 13V9h5" />
        </svg>
      </div>
      <div className="relative">
        <select
          aria-label="工作集"
          className="w-[289px] h-7 appearance-none border-t-2 border-r-2 border-[#cfcfcf] bg-white outline-none"
        />
        <span className="absolute right-[7px] top-2.5 pointer-events-none">
          <Caret className="text-[#8f8f8f]" />
        </span>
      </div>
      <div className="flex items-center w-[74px] h-7 ml-1 pl-2 gap-1.5 bg-[#d8d8d8] text-black">
        <svg width="22" height="26" viewBox="0 0 22 26" fill="#e4e4e4" stroke="#909090" strokeWidth="2">
          <path d="M6 3h13v6h-6L8 18" />
          <path d="M4 25l2-7h5l2 7z" fill="#909090" />
        </svg>
        :0
      </div>
      <div className="flex gap-[3px] pl-0.5">
        <StatusTool label="编辑请求">
          <rect x="1" y="3" width="22" height="22" rx="3" />
        </StatusTool>
        <StatusTool label="放弃请求">
          <path d="M3 2h20v20H3z" />
          <path d="M2 15h10v-4l7 7-7 7v-4H2z" fill="#c5ccd4" stroke="#f0f0f0" />
        </StatusTool>
      </div>
    </div>
    <div className="flex-1 flex flex-col justify-end">
      <div className="flex h-[9px] overflow-hidden border-t-2 border-[#6b6b6b] bg-[#cdcdcd]">
        <div className="w-[222px] pl-2 bg-white text-[17px] leading-[18px] text-[#333]">主模型</div>
      </div>
    </div>
    <div className="flex items-end gap-[2px]">
      <StatusTool label="选择链接">
        <path d="M1 8q0-5 6-4l6 3 6-3q6-1 6 4t-6 4l-2 12-7-3V13l-3-1q-6 1-6-4z" />
      </StatusTool>
      <StatusTool label="选择基线图元">
        <path d="M2 20L12 3h13l-3 20-6-5z" />
      </StatusTool>
      <StatusTool label="选择锁定图元">
        <path d="M5 2h12v8l8 10-6 4-4-6H2l4-6z" />
      </StatusTool>
      <StatusTool label="按面选择图元">
        <path d="M3 8l10-6v8l11 12-7 1-3-4H3z" />
      </StatusTool>
      <StatusTool label="选择时拖拽图元">
        <path d="M8 2v14M1 9h14M14 10v14l4-3 3 5 3-2-3-5h4z" fill="#f4f4f4" />
      </StatusTool>
    </div>
    <button className="flex w-[132px] pl-1 pt-1 gap-[7px] border-t-2 border-[#8b8b8b] bg-linear-to-b from-[#dedede] to-[#c2c2c2] text-[#222]">
      <svg width="24" height="24" viewBox="0 0 24 24" fill="#f0f0f0" stroke="#333" strokeWidth="2">
        <path d="M1 3h22v4l-9 8v8h-4v-8L1 7z" />
      </svg>
      <span className="pt-1 leading-6">:0</span>
    </button>
    <div className="absolute right-[42px] top-2 flex gap-7 text-[42px] leading-[50px] text-[#f4351a] pointer-events-none">
      <span className="font-['Liberation_Serif',serif] text-[36px]">LYB</span>
      <span>制作</span>
    </div>
  </footer>
);

const App = () => {
  return (
    <div
      lang="zh-CN"
      className="relative min-h-screen flex flex-col py-[29px] bg-black font-['Open_Sans','Noto_Sans_CJK_SC',sans-serif]"
    >
      <div className="flex flex-1 flex-col pl-0.5">
        <div className="flex">
          <button aria-label="应用程序菜单" className="w-14 mt-0.5 border-b-2 border-[#8f8f8f] bg-[#fafafa]" />
          <div className="flex-1">
            <QuickAccessBar />
            <TabBar />
          </div>
        </div>
        <Ribbon />
        <div className="h-[34px] bg-[#dfdfdf]" />
        <Workspace />
      </div>
      <StatusBar />
      <Watermark />
      <div className="absolute inset-0 flex items-center justify-center pl-1 pt-0.5 pointer-events-none">
        <div className="pointer-events-auto">
          <GoToViewDialog />
        </div>
      </div>
    </div>
  );
};

export default App;
